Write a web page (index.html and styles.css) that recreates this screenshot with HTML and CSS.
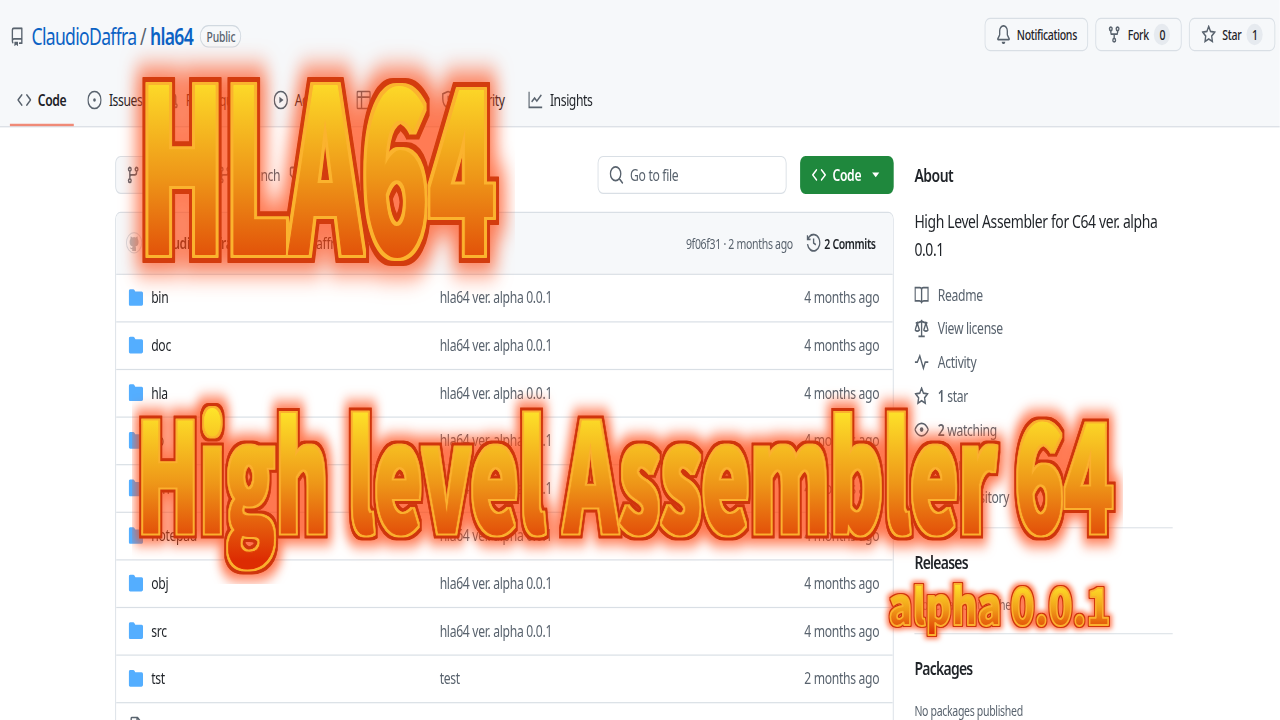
FILE: index.html
```html
<!DOCTYPE html>
<html lang="en">
  <head>
    <meta charset="UTF-8" />
    <title>ClaudioDaffra/hla64</title>
    <link rel="stylesheet" href="styles.css">
  </head>
  <body>
    <!-- Icon set -->
    <svg class="defs" width="0" height="0">
      <symbol id="i-repo" viewBox="0 0 16 16"><path d="M2 2.5A2.5 2.5 0 0 1 4.500 0h8.750a.75.75 0 0 1 .75.75v12.500a.75.75 0 0 1-.75.75h-2.500a.75.75 0 0 1 0-1.500h1.750v-2h-8a1 1 0 0 0-.714 1.700.75.75 0 1 1-1.072 1.050A2.495 2.495 0 0 1 2 11.500Zm10.500-1h-8a1 1 0 0 0-1 1v6.708A2.486 2.486 0 0 1 4.500 9h8ZM5 12.250a.25.25 0 0 1 .25-.25h3.500a.25.25 0 0 1 .25.25v3.250a.25.25 0 0 1-.4.2l-1.450-1.087a.249.249 0 0 0-.3 0L5.400 15.700a.25.25 0 0 1-.4-.2Z"/></symbol>
      <symbol id="i-code" viewBox="0 0 16 16"><path d="m11.280 3.220 4.250 4.250a.75.75 0 0 1 0 1.060l-4.250 4.250a.749.749 0 1 1-1.060-1.060L13.940 8l-3.720-3.720a.749.749 0 1 1 1.060-1.060Zm-6.560 0a.751.751 0 0 1 1.060 1.060L2.060 8l3.720 3.720a.749.749 0 1 1-1.060 1.060L.47 8.530a.75.75 0 0 1 0-1.060Z"/></symbol>
      <symbol id="i-issue" viewBox="0 0 16 16"><path d="M8 9.500a1.500 1.500 0 1 0 0-3 1.500 1.500 0 0 0 0 3Z"/><circle class="line" cx="8" cy="8" r="7.250"/></symbol>
      <symbol id="i-play" viewBox="0 0 16 16"><circle class="line" cx="8" cy="8" r="7.250"/><path d="M6.400 5.200v5.600L11 8Z"/></symbol>
      <symbol id="i-pull" viewBox="0 0 16 16"><g class="line"><circle cx="3.750" cy="3.250" r="1.500"/><circle cx="3.750" cy="12.750" r="1.500"/><circle cx="12.250" cy="12.750" r="1.500"/><path d="M3.750 5v6M12.250 11V5a1.500 1.500 0 0 0-1.500-1.500H8M10 1 7.500 3.500 10 6"/></g></symbol>
      <symbol id="i-table" viewBox="0 0 16 16"><g class="line"><rect x=".75" y=".75" width="14.500" height="14.500" rx="1.200"/><path d="M1 5.700h14M5.700 1v14"/></g></symbol>
      <symbol id="i-shield" viewBox="0 0 16 16"><path class="line" d="M8 .9 14 2.900V7c0 4-2.600 6.800-6 8.100C4.600 13.800 2 11 2 7V2.900ZM8 4.500V8"/><circle cx="8" cy="10.700" r="1"/></symbol>
      <symbol id="i-graph" viewBox="0 0 16 16"><path class="line" d="M.75 1v13.250H15.500M3.700 9.700 7 6.400l2.500 2.500 5-5.200"/></symbol>
      <symbol id="i-bell" viewBox="0 0 16 16"><path d="M8 16a2 2 0 0 0 1.985-1.750c.017-.137-.097-.25-.235-.25h-3.500c-.138 0-.252.113-.235.25A2 2 0 0 0 8 16Z"/><path class="line" d="M3.750 5a4.250 4.250 0 0 1 8.500 0v2.950c0 .34.100.680.300.970l1.750 2.600c.250.400 0 .73-.400.730H2.100c-.400 0-.650-.330-.400-.730l1.750-2.600c.200-.290.300-.630.300-.970Z"/></symbol>
      <symbol id="i-fork" viewBox="0 0 16 16"><g class="line"><circle cx="4.250" cy="3.250" r="1.500"/><circle cx="11.750" cy="3.250" r="1.500"/><circle cx="8" cy="12.750" r="1.500"/><path d="M4.250 5v1.250c0 .83.670 1.500 1.500 1.500h4.500c.83 0 1.500-.670 1.500-1.500V5M8 8v3"/></g></symbol>
      <symbol id="i-star" viewBox="0 0 16 16"><path class="line" d="m8 1.200 2 4.200 4.600.65-3.300 3.200.8 4.600L8 11.700l-4.100 2.150.8-4.600-3.300-3.200L6 5.400Z"/></symbol>
      <symbol id="i-branch" viewBox="0 0 16 16"><g class="line"><circle cx="4.250" cy="3.250" r="1.500"/><circle cx="4.250" cy="12.750" r="1.500"/><circle cx="11.750" cy="3.250" r="1.500"/><path d="M4.250 5v6M11.750 5v1A2 2 0 0 1 9.750 8h-3.500a2 2 0 0 0-2 2"/></g></symbol>
      <symbol id="i-tag" viewBox="0 0 16 16"><path class="line" d="M1.750 2.750a1 1 0 0 1 1-1h5.100l6.400 6.400a1 1 0 0 1 0 1.400l-4.700 4.700a1 1 0 0 1-1.400 0l-6.400-6.400Z"/><circle cx="5.500" cy="5.500" r="1"/></symbol>
      <symbol id="i-search" viewBox="0 0 16 16"><path class="line" d="M7 1.250a5.750 5.750 0 1 0 0 11.500 5.750 5.750 0 0 0 0-11.500ZM11 11l4 4"/></symbol>
      <symbol id="i-history" viewBox="0 0 16 16"><path class="line" d="M1.200 9.200A6.900 6.900 0 1 0 3.300 2.900L1.200 5M1.100 1.700v3.500h3.500M8 4.500V8.200l2.500 1.500"/></symbol>
      <symbol id="i-folder" viewBox="0 0 16 16"><path d="M1.750 1A1.750 1.750 0 0 0 0 2.750v10.500C0 14.216.784 15 1.750 15h12.500A1.750 1.750 0 0 0 16 13.250v-8.500A1.750 1.750 0 0 0 14.250 3H7.500a.25.25 0 0 1-.2-.1l-.9-1.200C6.070 1.260 5.550 1 5 1H1.750Z"/></symbol>
      <symbol id="i-file" viewBox="0 0 16 16"><path class="line" d="M2.750 14.250V1.750a1 1 0 0 1 1-1h5.900l3.600 3.600v9.900a1 1 0 0 1-1 1h-8.500a1 1 0 0 1-1-1ZM9.250 1v3.750H13"/></symbol>
      <symbol id="i-book" viewBox="0 0 16 16"><path class="line" d="M8 3.500c0-1.100-.9-1.750-2-1.750H.75v11H5.500c1.300 0 2 .5 2.500 1.300.5-.8 1.200-1.300 2.500-1.300h4.750v-11H10c-1.100 0-2 .65-2 1.750V14"/></symbol>
      <symbol id="i-law" viewBox="0 0 16 16"><path class="line" d="M8 .7v14.100M4.500 14.750h7M1.500 3.300h2.300L8 2l4.200 1.300h2.300M3.200 3.500.9 9.300c1.300 1.100 3.300 1.100 4.600 0ZM12.800 3.500l-2.300 5.800c1.300 1.100 3.300 1.100 4.600 0Z"/></symbol>
      <symbol id="i-pulse" viewBox="0 0 16 16"><path class="line" d="M.5 8.250h2.750L6 3l4 10.500 2-5.250h3.500"/></symbol>
      <symbol id="i-eye" viewBox="0 0 16 16"><path class="line" d="M8 2.750c-3.300 0-5.900 2.500-7.200 4.800a.8.800 0 0 0 0 .9c1.300 2.300 3.900 4.800 7.200 4.800s5.900-2.500 7.200-4.800a.8.800 0 0 0 0-.9C13.900 5.250 11.300 2.750 8 2.750Z"/><circle cx="8" cy="8" r="2"/></symbol>
      <symbol id="i-cat" viewBox="0 0 16 16"><path d="M4.200 2.500 6.200 3.500a7 7 0 0 1 3.600 0l2-1 .3 2.300c.6.700.9 1.500.9 2.500 0 2.400-1.400 3.400-3.400 3.700.3.300.5.700.5 1.300V15H5.900v-1.700c-1.600.3-2-.6-2.500-1.400.9-.1 1.300.6 2.500.5 0-.6.200-1.100.5-1.400C4.400 10.700 3 9.700 3 7.300c0-1 .3-1.800.9-2.500Z"/></symbol>
    </svg>

    <div class="page">
      <header class="header">
        <div class="title-row">
          <svg class="icon muted"><use href="#i-repo"/></svg>
          <a class="owner">ClaudioDaffra</a>
          <span class="slash">/</span>
          <a class="repo">hla64</a>
          <span class="label">Public</span>
          <div class="actions">
            <button class="btn btn-notify"><svg class="icon"><use href="#i-bell"/></svg>Notifications</button>
            <button class="btn"><svg class="icon"><use href="#i-fork"/></svg>Fork <span class="counter">0</span></button>
            <button class="btn"><svg class="icon"><use href="#i-star"/></svg>Star <span class="counter">1</span></button>
          </div>
        </div>
        <nav class="tabs">
          <a class="tab active"><svg class="icon"><use href="#i-code"/></svg>Code</a>
          <a class="tab"><svg class="icon"><use href="#i-issue"/></svg>Issues</a>
          <a class="tab"><svg class="icon"><use href="#i-pull"/></svg>Pull requests</a>
          <a class="tab"><svg class="icon"><use href="#i-play"/></svg>Actions</a>
          <a class="tab"><svg class="icon"><use href="#i-table"/></svg>Projects</a>
          <a class="tab"><svg class="icon"><use href="#i-shield"/></svg>Security</a>
          <a class="tab"><svg class="icon"><use href="#i-graph"/></svg>Insights</a>
        </nav>
      </header>

      <div class="layout">
        <main class="content">
          <div class="toolbar">
            <button class="branch-btn"><svg class="icon"><use href="#i-branch"/></svg>main</button>
            <span class="ref"><svg class="icon"><use href="#i-branch"/></svg>1 Branch</span>
            <span class="ref"><svg class="icon"><use href="#i-tag"/></svg>0 Tags</span>
            <div class="search"><svg class="icon"><use href="#i-search"/></svg>Go to file</div>
            <button class="code-btn"><svg class="icon"><use href="#i-code"/></svg>Code<span class="caret"></span></button>
          </div>

          <div class="files">
            <div class="commit">
              <svg class="icon avatar"><use href="#i-cat"/></svg>
              <span class="author">ClaudioDaffra</span>
              <span class="message">ClaudioDaffra</span>
              <span class="sha">9f06f31 · 2 months ago</span>
              <svg class="icon"><use href="#i-history"/></svg>
              <span class="commits">2 Commits</span>
            </div>
            <div class="row"><svg class="icon folder"><use href="#i-folder"/></svg><span class="name">bin</span><span>hla64 ver. alpha 0.0.1</span><span class="age">4 months ago</span></div>
            <div class="row"><svg class="icon folder"><use href="#i-folder"/></svg><span class="name">doc</span><span>hla64 ver. alpha 0.0.1</span><span class="age">4 months ago</span></div>
            <div class="row"><svg class="icon folder"><use href="#i-folder"/></svg><span class="name">hla</span><span>hla64 ver. alpha 0.0.1</span><span class="age">4 months ago</span></div>
            <div class="row"><svg class="icon folder"><use href="#i-folder"/></svg><span class="name">lib</span><span>hla64 ver. alpha 0.0.1</span><span class="age">4 months ago</span></div>
            <div class="row"><svg class="icon folder"><use href="#i-folder"/></svg><span class="name">mh</span><span>hla64 ver. alpha 0.0.1</span><span class="age">4 months ago</span></div>
            <div class="row"><svg class="icon folder"><use href="#i-folder"/></svg><span class="name">notepad</span><span>hla64 ver. alpha 0.0.1</span><span class="age">4 months ago</span></div>
            <div class="row"><svg class="icon folder"><use href="#i-folder"/></svg><span class="name">obj</span><span>hla64 ver. alpha 0.0.1</span><span class="age">4 months ago</span></div>
            <div class="row"><svg class="icon folder"><use href="#i-folder"/></svg><span class="name">src</span><span>hla64 ver. alpha 0.0.1</span><span class="age">4 months ago</span></div>
            <div class="row"><svg class="icon folder"><use href="#i-folder"/></svg><span class="name">tst</span><span>test</span><span class="age">2 months ago</span></div>
            <div class="row"><svg class="icon"><use href="#i-file"/></svg><span class="name">.gitignore</span><span>hla64 ver. alpha 0.0.1</span><span class="age">4 months ago</span></div>
          </div>
        </main>

        <aside class="sidebar">
          <section class="about">
            <h2>About</h2>
            <p class="desc">High Level Assembler for C64 ver. alpha 0.0.1</p>
            <ul class="meta">
              <li><svg class="icon"><use href="#i-book"/></svg>Readme</li>
              <li><svg class="icon"><use href="#i-law"/></svg>View license</li>
              <li><svg class="icon"><use href="#i-pulse"/></svg>Activity</li>
              <li><svg class="icon"><use href="#i-star"/></svg><b>1</b>&nbsp;star</li>
              <li><svg class="icon"><use href="#i-eye"/></svg><b>2</b>&nbsp;watching</li>
              <li><svg class="icon"><use href="#i-fork"/></svg><b>0</b>&nbsp;forks</li>
              <li class="report">Report repository</li>
            </ul>
          </section>
          <section class="side-block">
            <h2>Releases</h2>
            <p class="note">No releases published</p>
          </section>
          <section class="side-block">
            <h2>Packages</h2>
            <p class="note">No packages published</p>
          </section>
        </aside>
      </div>
    </div>

    <!-- Fire lettering over the page -->
    <svg class="banner" viewBox="0 0 1280 720">
      <defs>
        <linearGradient id="fire1" gradientUnits="userSpaceOnUse" x1="0" y1="80" x2="0" y2="275">
          <stop offset="0" stop-color="#fddc29"/><stop offset=".5" stop-color="#ee9618"/><stop offset="1" stop-color="#df4206"/>
        </linearGradient>
        <linearGradient id="fire2" gradientUnits="userSpaceOnUse" x1="0" y1="408" x2="0" y2="560">
          <stop offset="0" stop-color="#fee52a"/><stop offset=".5" stop-color="#ee9618"/><stop offset="1" stop-color="#dd2c02"/>
        </linearGradient>
        <linearGradient id="fire3" gradientUnits="userSpaceOnUse" x1="0" y1="584" x2="0" y2="635">
          <stop offset="0" stop-color="#fee52a"/><stop offset=".5" stop-color="#f09c18"/><stop offset="1" stop-color="#dd2c02"/>
        </linearGradient>
        <!-- fill, thin gold rim, dark red edge, wide halo -->
        <filter id="glow1" filterUnits="userSpaceOnUse" x="110" y="35" width="405" height="280" color-interpolation-filters="sRGB">
          <feMorphology in="SourceAlpha" operator="dilate" radius="3" result="rim"/>
          <feFlood flood-color="#fbb32e"/><feComposite in2="rim" operator="in" result="gold"/>
          <feMorphology in="SourceAlpha" operator="dilate" radius="6 8" result="edge"/>
          <feFlood flood-color="#d33c0e"/><feComposite in2="edge" operator="in" result="outline"/>
          <feMorphology in="SourceAlpha" operator="dilate" radius="12 18"/><feGaussianBlur stdDeviation="8 12" result="halo"/>
          <feFlood flood-color="#ff4812" flood-opacity=".72"/><feComposite in2="halo" operator="in" result="halo"/>
          <feMerge><feMergeNode in="halo"/><feMergeNode in="outline"/><feMergeNode in="gold"/><feMergeNode in="SourceGraphic"/></feMerge>
        </filter>
        <filter id="glow2" filterUnits="userSpaceOnUse" x="132" y="375" width="991" height="209" color-interpolation-filters="sRGB">
          <feMorphology in="SourceAlpha" operator="dilate" radius="2" result="rim"/>
          <feFlood flood-color="#fbb02e"/><feComposite in2="rim" operator="in" result="gold"/>
          <feMorphology in="SourceAlpha" operator="dilate" radius="4 5" result="edge"/>
          <feFlood flood-color="#cf350c"/><feComposite in2="edge" operator="in" result="outline"/>
          <feMorphology in="SourceAlpha" operator="dilate" radius="8 11"/><feGaussianBlur stdDeviation="5 7" result="halo"/>
          <feFlood flood-color="#ff4812" flood-opacity=".74"/><feComposite in2="halo" operator="in" result="halo"/>
          <feMerge><feMergeNode in="halo"/><feMergeNode in="outline"/><feMergeNode in="gold"/><feMergeNode in="SourceGraphic"/></feMerge>
        </filter>
        <filter id="glow3" filterUnits="userSpaceOnUse" x="870" y="570" width="260" height="80" color-interpolation-filters="sRGB">
          <feMorphology in="SourceAlpha" operator="dilate" radius="1" result="edge"/>
          <feFlood flood-color="#cf350c"/><feComposite in2="edge" operator="in" result="outline"/>
          <feMorphology in="SourceAlpha" operator="dilate" radius="3"/><feGaussianBlur stdDeviation="2.5" result="halo"/>
          <feFlood flood-color="#ff5a28" flood-opacity=".8"/><feComposite in2="halo" operator="in" result="halo"/>
          <feMerge><feMergeNode in="halo"/><feMergeNode in="outline"/><feMergeNode in="SourceGraphic"/></feMerge>
        </filter>
      </defs>
      <text class="fire" x="139.500" y="253.500" font-size="225" textLength="356" lengthAdjust="spacingAndGlyphs" fill="url(#fire1)" stroke="url(#fire1)" stroke-width="2" filter="url(#glow1)">HLA64</text>
      <text class="fire" x="136.500" y="532.500" font-size="150" textLength="977" lengthAdjust="spacingAndGlyphs" fill="url(#fire2)" stroke="url(#fire2)" stroke-width="1" filter="url(#glow2)">High level Assembler 64</text>
      <text class="fire" x="888.500" y="625" font-size="50.500" textLength="222" lengthAdjust="spacingAndGlyphs" fill="url(#fire3)" stroke="#fbb02e" stroke-width="2" filter="url(#glow3)">alpha 0.0.1</text>
    </svg>
  </body>
</html>
```

FILE: styles.css
```css
html {
  overflow: hidden;
}
body {
  margin: 0;
  width: 1280px;
  height: 720px;
  overflow: hidden;
  position: relative;
  background: #fff;
  font-family: "Noto Sans", "Open Sans", sans-serif;
}
.defs {
  position: absolute;
}
/* the page is stretched: narrow and tall */
.page {
  width: 1422.2px;
  height: 605px;
  overflow: hidden;
  transform: scale(0.9, 1.19);
  transform-origin: 0 0;
  color: #1f2328;
  font-size: 13.5px;
  letter-spacing: -0.35px;
}
.icon {
  width: 16px;
  height: 16px;
  flex: none;
  fill: currentColor;
  color: #59636e;
}
.line {
  fill: none;
  stroke: currentColor;
  stroke-width: 1.5;
}
button {
  font: inherit;
  letter-spacing: inherit;
  color: inherit;
  box-sizing: border-box;
}
.header {
  box-sizing: border-box;
  height: 107px;
  background: #f6f8fa;
  border-bottom: 1px solid #d9dee4;
}
.title-row {
  display: flex;
  align-items: center;
  height: 61px;
  padding: 0 5px 0 11px;
  font-size: 19.5px;
}
.title-row > .icon {
  margin-right: 8px;
}
.owner,
.repo {
  color: #0b62c4;
  letter-spacing: -0.75px;
}
.repo {
  font-weight: 600;
}
.slash {
  margin: 0 4px;
  color: #59636e;
}
.label {
  margin-left: 8px;
  padding: 0 6px;
  border: 1px solid #d1d9e0;
  border-radius: 10px;
  font-size: 11.5px;
  line-height: 17px;
  font-weight: 500;
  letter-spacing: -0.2px;
  color: #59636e;
}
.actions {
  display: flex;
  gap: 8px;
  margin-left: auto;
  margin-bottom: 4px;
}
.btn {
  display: flex;
  align-items: center;
  justify-content: center;
  width: 96px;
  height: 28px;
  padding: 0;
  border: 1px solid #d9dfe5;
  border-radius: 6px;
  background: #f6f8fa;
  font-size: 11.7px;
  font-weight: 500;
}
.btn-notify {
  width: 115px;
}
.btn .icon {
  margin-right: 7px;
}
.counter {
  margin-left: 6px;
  width: 18px;
  border-radius: 10px;
  background: #e6eaef;
  line-height: 18px;
}
.tabs {
  display: grid;
  grid-template-columns: 71px 78.5px 114px 85px 87px 90.5px 85px;
  gap: 7px;
  height: 45px;
  padding-left: 11px;
}
.tab {
  display: flex;
  align-items: center;
  padding-left: 8px;
  white-space: nowrap;
  letter-spacing: -0.45px;
}
.tab .icon {
  margin-right: 8px;
}
.tab.active {
  font-weight: 600;
  border-bottom: 2px solid #f08a77;
  padding-top: 2px;
  height: 41px;
}
.tab.active .icon {
  margin-right: 7px;
}
.layout {
  display: flex;
  gap: 23px;
  padding: 24px 0 0 128px;
}
.content {
  width: 865px;
  flex: none;
}
.toolbar {
  display: flex;
  align-items: center;
  height: 32px;
}
.branch-btn {
  display: flex;
  align-items: center;
  width: 96px;
  height: 32px;
  padding: 0 11px;
  margin-right: 18px;
  border: 1px solid #d9dfe5;
  border-radius: 6px;
  background: #f6f8fa;
}
.branch-btn .icon {
  margin-right: 6px;
}
.ref {
  display: flex;
  align-items: center;
  gap: 1px;
  margin-right: 10px;
  letter-spacing: -0.5px;
  color: #59636e;
}
.search {
  box-sizing: border-box;
  display: flex;
  align-items: center;
  gap: 7px;
  width: 210px;
  height: 32px;
  margin-left: auto;
  padding-left: 12px;
  border: 1px solid #d9dfe5;
  border-radius: 6px;
  color: #59636e;
}
.code-btn {
  display: flex;
  align-items: center;
  width: 104px;
  height: 32px;
  margin-left: 15px;
  padding: 0 13px;
  border: 0;
  border-radius: 6px;
  background: #1f883d;
  color: #fff;
  font-weight: 600;
}
.code-btn .icon {
  margin-right: 7px;
  color: #fff;
}
.caret {
  margin-left: auto;
  margin-right: 3px;
  border: 4px solid transparent;
  border-top-color: #fff;
  border-bottom: 0;
}
.files {
  margin-top: 15px;
  border: 1px solid #d9dfe5;
  border-radius: 6px 6px 0 0;
  overflow: hidden;
}
.commit {
  display: flex;
  align-items: center;
  height: 50.5px;
  padding: 0 19px 0 11px;
  background: #f6f8fa;
  font-size: 11.7px;
}
.avatar {
  border: 1px solid #d1d9e0;
  border-radius: 50%;
  color: #b3b8be;
}
.author,
.message {
  font-size: 13.5px;
}
.author {
  margin-left: 14px;
  font-weight: 600;
}
.message {
  margin-left: 38px;
}
.sha {
  margin-left: auto;
  margin-right: 15px;
  color: #59636e;
}
.commits {
  margin-left: 4px;
  font-weight: 600;
  letter-spacing: -0.4px;
}
.row {
  box-sizing: border-box;
  display: grid;
  grid-template-columns: 25px 320.5px 1fr auto;
  align-items: center;
  height: 40px;
  padding: 0 15px 0 14px;
  border-top: 1px solid #d9dfe5;
  color: #59636e;
}
.name {
  color: #1f2328;
}
.folder {
  color: #54aeff;
}
.sidebar {
  width: 287px;
}
h2 {
  margin: 0;
  font-size: 15.5px;
  line-height: 24px;
  font-weight: 600;
  letter-spacing: -0.8px;
}
.about h2 {
  padding-top: 4px;
  letter-spacing: -0.55px;
}
.desc {
  margin: 16px 0 12.5px;
  font-size: 15.5px;
  line-height: 23px;
  letter-spacing: -0.42px;
}
.meta {
  list-style: none;
  margin: 0;
  padding: 0;
  color: #59636e;
}
.meta li {
  display: flex;
  align-items: center;
  height: 28.4px;
}
.meta .icon {
  margin-right: 10px;
}
.meta b {
  font-weight: 600;
}
.about {
  height: 312px;
}
.side-block {
  box-sizing: border-box;
  height: 89px;
  padding-top: 16px;
  border-top: 1px solid #dfe4e9;
}
.note {
  margin: 15px 0 0;
  font-size: 11.7px;
  line-height: 18px;
  color: #59636e;
}
.banner {
  position: absolute;
  left: 0;
  top: 0;
  width: 1280px;
  height: 720px;
}
.fire {
  font-family: "Noto Sans CJK JP", "Noto Sans", sans-serif;
  font-weight: 900;
  stroke-linejoin: round;
}
```
